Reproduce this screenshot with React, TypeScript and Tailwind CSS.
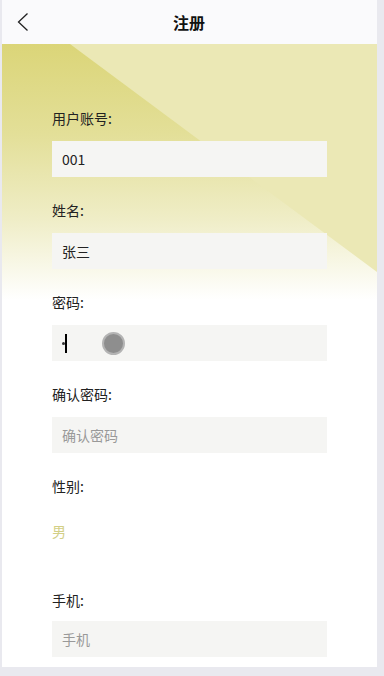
import React from "react";

const font = { fontFamily: '"Noto Sans CJK SC", "Noto Sans", sans-serif' };

function Label({ children, mb = "mb-[13px]" }: { children: React.ReactNode; mb?: string }) {
  return <div className={"text-[14px] leading-[20px] text-[#222] " + mb}>{children}</div>;
}

function Field({ children }: { children: React.ReactNode }) {
  return (
    <div className="relative h-[36px] bg-[#f5f5f3] px-[10px] flex items-center text-[14px] mb-[23px]">
      {children}
    </div>
  );
}

export default function App() {
  return (
    <div className="w-full h-[676px] bg-[#e9e9ef] pl-[2px] pr-[7px] pb-[9px]" style={font}>
      <div className="h-[667px] bg-white overflow-hidden flex flex-col">
        <div className="relative h-[44px] bg-[#fafafc] flex items-center justify-center shrink-0">
          <svg className="absolute left-[12px] top-[11px]" width="18" height="22" viewBox="0 0 18 22">
            <path d="M13.5 2.5 L4.5 11 L13.5 19.5" fill="none" stroke="#222" strokeWidth="1.3" />
          </svg>
          <span className="text-[16px] font-bold text-[#111] pr-[1px]">注册</span>
        </div>
        <div className="relative flex-1 pt-[64px] px-[50px]">
          <div className="absolute left-0 right-0 top-0 h-[256px] bg-[linear-gradient(to_bottom,#dbd578_0%,#e3df98_35%,#efedc6_68%,#ffffff_100%)]" />
          <div className="absolute left-0 right-0 top-0 h-[232px] bg-[#ebe8b5] [clip-path:polygon(68px_0,100%_0,100%_228px)]" />
          <div className="relative">
            <Label>用户账号:</Label>
            <Field><span className="text-[#222]">001</span></Field>
            <Label>姓名:</Label>
            <Field><span className="text-[#222]">张三</span></Field>
            <Label>密码:</Label>
            <Field>
              <span className="w-[3px] h-[3px] rounded-full bg-[#333]" />
              <span className="w-[1.5px] h-[19px] bg-black" />
              <span className="absolute left-[50px] top-[7px] w-[23px] h-[23px] rounded-full bg-[#8e8e8e] border-[2px] border-[#b4b4b4]" />
            </Field>
            <Label>确认密码:</Label>
            <Field><span className="text-[#999]">确认密码</span></Field>
            <Label>性别:</Label>
            <div className="mt-[25px] text-[14px] leading-[20px] text-[#d3cf86] mb-[49px]">男</div>
            <Label mb="mb-[11px]">手机:</Label>
            <Field><span className="text-[#999]">手机</span></Field>
          </div>
        </div>
      </div>
    </div>
  );
}
